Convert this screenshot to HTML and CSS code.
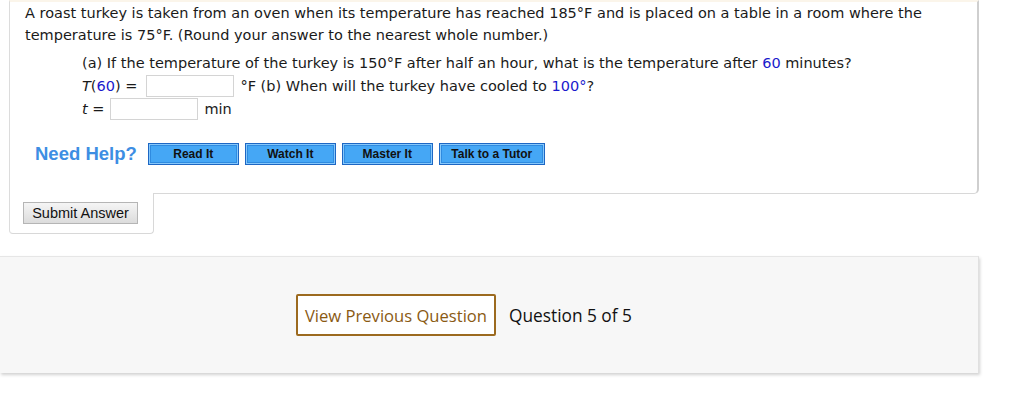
FILE: index.html
```html
<!DOCTYPE html>
<html>
<head>
<meta charset="utf-8">
<link rel="stylesheet" href="styles.css">
</head>
<body>
<div class="page">
  <div class="card">
    <p class="question">A roast turkey is taken from an oven when its temperature has reached 185°F and is placed on a table in a room where the temperature is 75°F. (Round your answer to the nearest whole number.)</p>
    <div class="parts">
      <div class="line">(a) If the temperature of the turkey is 150°F after half an hour, what is the temperature after <span class="num">60</span> minutes?</div>
      <div class="row"><span><i>T</i>(<span class="num">60</span>) =</span><span class="input in-a"></span><span>°F (b) When will the turkey have cooled to <span class="num">100°</span>?</span></div>
      <div class="row"><span><i>t</i> =</span><span class="input"></span><span>min</span></div>
    </div>
    <div class="help">
      <span class="need">Need Help?</span>
      <span class="hbtn">Read It</span>
      <span class="hbtn">Watch It</span>
      <span class="hbtn">Master It</span>
      <span class="hbtn wide">Talk to a Tutor</span>
    </div>
  </div>
  <div class="tab">
    <span class="submit">Submit Answer</span>
  </div>
</div>
<div class="panel">
  <span class="prev">View Previous Question</span>
  <span class="count">Question 5 of 5</span>
</div>
</body>
</html>
```
FILE: styles.css
```css
html, body {
  margin: 0;
  padding: 0;
  background: #fff;
}
body {
  font-family: "DejaVu Sans", Verdana, sans-serif;
  font-size: 14.5px;
  color: #1a1a1a;
  width: 1024px;
  height: 411px;
  overflow: hidden;
}
.page {
  margin-left: 9px;
  width: 970px;
}
.card {
  border-top: 2px solid #fbf5ea;
  border-left: 1px solid #dcdcdc;
  border-right: 2px solid #cfcfcf;
  border-bottom: 1px solid #d8d8d8;
  border-bottom-right-radius: 5px;
  padding: 0 0 28px 15px;
  height: 163px;
  box-sizing: content-box;
}
.question {
  margin: 0;
  line-height: 22px;
  width: 930px;
}
.parts {
  margin-top: 6px;
  margin-left: 57px;
}
.line {
  height: 22px;
  line-height: 22px;
}
.row {
  display: flex;
  align-items: center;
  gap: 6px;
  height: 23px;
}
.num {
  color: #1a1acc;
}
.input {
  display: inline-block;
  width: 86px;
  height: 20px;
  border: 1px solid #d4d4d4;
  background: #fff;
}
.in-a {
  margin-left: 3px;
}
.help {
  display: flex;
  align-items: center;
  gap: 6px;
  margin-top: 23px;
  margin-left: 10px;
  height: 22px;
}
.need {
  font-family: "Liberation Sans", Arial, sans-serif;
  font-weight: bold;
  font-size: 18.5px;
  color: #3d8ee3;
  margin-right: 5px;
}
.hbtn {
  box-sizing: border-box;
  width: 91px;
  height: 22px;
  display: flex;
  align-items: center;
  justify-content: center;
  font-family: "Liberation Sans", Arial, sans-serif;
  font-weight: bold;
  font-size: 12px;
  color: #111;
  background: #45a7f5;
  border: 1px solid #1d67c4;
  box-shadow: inset 0 0 0 1px #86c8fb, inset 0 0 0 2px #2f8be0;
}
.hbtn.wide {
  width: 106px;
}
.tab {
  width: 130px;
  margin-top: -1px;
  background: #fff;
  border-left: 1px solid #dcdcdc;
  border-right: 1px solid #d8d8d8;
  border-bottom: 1px solid #d8d8d8;
  border-bottom-left-radius: 4px;
  border-bottom-right-radius: 4px;
  padding: 9px 0 9px 13px;
  position: relative;
  z-index: 1;
}
.submit {
  display: inline-flex;
  align-items: center;
  justify-content: center;
  box-sizing: border-box;
  width: 115px;
  height: 22px;
  font-family: "Liberation Sans", Arial, sans-serif;
  font-size: 14.5px;
  color: #111;
  background: linear-gradient(#f5f5f5, #dcdcdc);
  border: 1px solid #b5b5b5;
  vertical-align: top;
}
.panel {
  margin-top: 22px;
  width: 979px;
  height: 117px;
  box-sizing: border-box;
  background: #f7f7f7;
  border-top: 1px solid #e6e6e6;
  border-right: 1px solid #e0e0e0;
  box-shadow: 1px 2px 3px rgba(0,0,0,0.18);
  display: flex;
  align-items: center;
  padding-left: 296px;
  font-family: "Open Sans", sans-serif;
}
.prev {
  box-sizing: border-box;
  width: 200px;
  height: 42px;
  display: flex;
  align-items: center;
  justify-content: center;
  border: 2px solid #9c6a1f;
  border-radius: 2px;
  background: #fff;
  color: #8a5a13;
  font-size: 16.6px;
}
.count {
  margin-left: 13px;
  font-size: 17.3px;
  color: #111;
}
```
